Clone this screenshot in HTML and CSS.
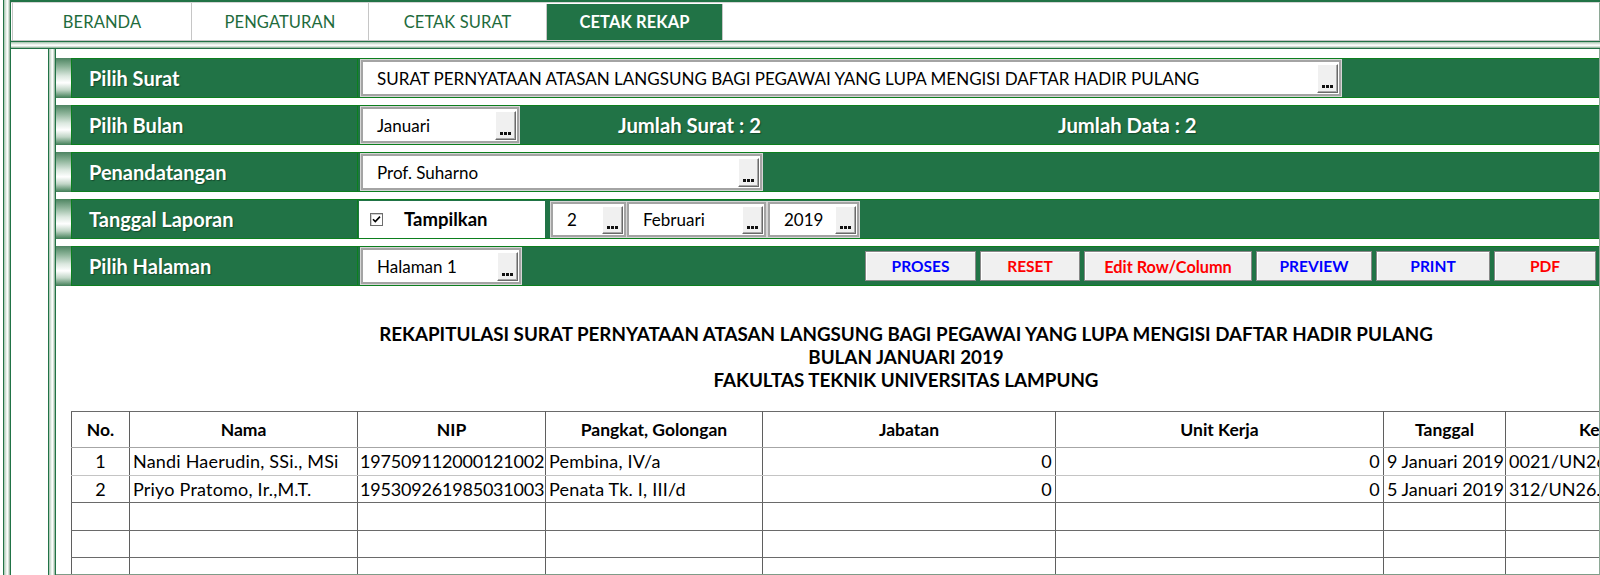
FILE: index.html
```html
<!DOCTYPE html>
<html lang="id">
<head>
<meta charset="utf-8">
<title>Cetak Rekap</title>
<link rel="stylesheet" href="styles.css">
</head>
<body>
<div class="app">
  <div class="obar"></div>
  <div class="main">
    <div class="topline"></div>
    <nav class="tabs">
      <div class="tab t1">BERANDA</div>
      <div class="tab t2">PENGATURAN</div>
      <div class="tab t3">CETAK SURAT</div>
      <div class="tab t4 active">CETAK REKAP</div>
    </nav>
    <div class="hbar"></div>
    <div class="body">
      <div class="lgap"></div>
      <div class="ibar"></div>
      <div class="content">
        <div class="form">
          <div class="row">
            <div class="cap"></div>
            <div class="rb">
              <div class="lbl">Pilih Surat</div>
              <div class="dd w-surat"><span class="val">SURAT PERNYATAAN ATASAN LANGSUNG BAGI PEGAWAI YANG LUPA MENGISI DAFTAR HADIR PULANG</span><span class="eb"><svg width="11" height="3" viewBox="0 0 11 3"><rect x="0" y="0" width="3" height="3"/><rect x="4" y="0" width="3" height="3"/><rect x="8" y="0" width="3" height="3"/></svg></span></div>
            </div>
          </div>
          <div class="row">
            <div class="cap"></div>
            <div class="rb">
              <div class="lbl">Pilih Bulan</div>
              <div class="dd w-bulan"><span class="val">Januari</span><span class="eb"><svg width="11" height="3" viewBox="0 0 11 3"><rect x="0" y="0" width="3" height="3"/><rect x="4" y="0" width="3" height="3"/><rect x="8" y="0" width="3" height="3"/></svg></span></div>
              <div class="stat s1">Jumlah Surat : 2</div>
              <div class="stat s2">Jumlah Data : 2</div>
            </div>
          </div>
          <div class="row">
            <div class="cap"></div>
            <div class="rb">
              <div class="lbl">Penandatangan</div>
              <div class="dd w-ttd"><span class="val">Prof. Suharno</span><span class="eb"><svg width="11" height="3" viewBox="0 0 11 3"><rect x="0" y="0" width="3" height="3"/><rect x="4" y="0" width="3" height="3"/><rect x="8" y="0" width="3" height="3"/></svg></span></div>
            </div>
          </div>
          <div class="row">
            <div class="cap"></div>
            <div class="rb">
              <div class="lbl">Tanggal Laporan</div>
              <div class="chkwrap">
                <span class="chk"><svg width="11" height="11" viewBox="0 0 11 11"><path d="M2 5.2 L4.3 7.6 L9 2.6" fill="none" stroke="#000" stroke-width="1.6"/></svg></span>
                <span class="chklbl">Tampilkan</span>
              </div>
              <div class="dd sm w-tgl"><span class="val">2</span><span class="eb"><svg width="11" height="3" viewBox="0 0 11 3"><rect x="0" y="0" width="3" height="3"/><rect x="4" y="0" width="3" height="3"/><rect x="8" y="0" width="3" height="3"/></svg></span></div>
              <div class="dd sm w-bln"><span class="val">Februari</span><span class="eb"><svg width="11" height="3" viewBox="0 0 11 3"><rect x="0" y="0" width="3" height="3"/><rect x="4" y="0" width="3" height="3"/><rect x="8" y="0" width="3" height="3"/></svg></span></div>
              <div class="dd sm w-thn"><span class="val">2019</span><span class="eb"><svg width="11" height="3" viewBox="0 0 11 3"><rect x="0" y="0" width="3" height="3"/><rect x="4" y="0" width="3" height="3"/><rect x="8" y="0" width="3" height="3"/></svg></span></div>
            </div>
          </div>
          <div class="row">
            <div class="cap"></div>
            <div class="rb">
              <div class="lbl">Pilih Halaman</div>
              <div class="dd w-hal"><span class="val">Halaman 1</span><span class="eb"><svg width="11" height="3" viewBox="0 0 11 3"><rect x="0" y="0" width="3" height="3"/><rect x="4" y="0" width="3" height="3"/><rect x="8" y="0" width="3" height="3"/></svg></span></div>
              <div class="btns">
                <button class="b blue b-proses">PROSES</button>
                <button class="b red b-reset">RESET</button>
                <button class="b red b-edit">Edit Row/Column</button>
                <button class="b blue b-preview">PREVIEW</button>
                <button class="b blue b-print">PRINT</button>
                <button class="b red b-pdf">PDF</button>
              </div>
            </div>
          </div>
        </div>

        <div class="report">
          <div class="title">
            <div>REKAPITULASI SURAT PERNYATAAN ATASAN LANGSUNG BAGI PEGAWAI YANG LUPA MENGISI DAFTAR HADIR PULANG</div>
            <div>BULAN JANUARI 2019</div>
            <div>FAKULTAS TEKNIK UNIVERSITAS LAMPUNG</div>
          </div>
          <table class="rekap">
            <colgroup>
              <col class="c-no"><col class="c-nama"><col class="c-nip"><col class="c-pkt"><col class="c-jab"><col class="c-unit"><col class="c-tgl"><col class="c-ket">
            </colgroup>
            <thead>
              <tr>
                <th>No.</th><th>Nama</th><th>NIP</th><th>Pangkat, Golongan</th><th>Jabatan</th><th>Unit Kerja</th><th>Tanggal</th><th class="ket kh">Keterangan</th>
              </tr>
            </thead>
            <tbody>
              <tr class="r1">
                <td class="ctr">1</td><td>Nandi Haerudin, SSi., MSi</td><td class="nip">197509112000121002</td><td>Pembina, IV/a</td><td class="num">0</td><td class="num">0</td><td class="tg">9 Januari 2019</td><td class="ket">0021/UN26.15/KP/2019</td>
              </tr>
              <tr class="r2">
                <td class="ctr">2</td><td>Priyo Pratomo, Ir.,M.T.</td><td class="nip">195309261985031003</td><td>Penata Tk. I, III/d</td><td class="num">0</td><td class="num">0</td><td class="tg">5 Januari 2019</td><td class="ket">312/UN26.15/KP/2019</td>
              </tr>
              <tr><td></td><td></td><td></td><td></td><td></td><td></td><td></td><td class="ket"></td></tr>
              <tr><td></td><td></td><td></td><td></td><td></td><td></td><td></td><td class="ket"></td></tr>
              <tr><td></td><td></td><td></td><td></td><td></td><td></td><td></td><td class="ket"></td></tr>
            </tbody>
          </table>
        </div>
      </div>
    </div>
  </div>
</div>
</body>
</html>
```

FILE: styles.css
```css
* { box-sizing: border-box; }
html, body { margin: 0; padding: 0; }
body {
  width: 1600px;
  height: 575px;
  overflow: hidden;
  background: #fff;
  font-family: "Lato", "Liberation Sans", sans-serif;
  color: #000;
}
.app {
  display: flex;
  width: 1600px;
  height: 575px;
  overflow: hidden;
}
.obar {
  width: 8px;
  margin-left: 3px;
  flex: none;
  background: linear-gradient(to right, #217346 0, #217346 1px, #a3c1ac 1px, #e6efe8 40%, #ffffff 55%, #c2d5c7 75%, #7aa286 calc(100% - 1px), #217346 calc(100% - 1px));
}
.main {
  flex: 1;
  display: flex;
  flex-direction: column;
  min-width: 0;
}
.topline { height: 2px; background: #217346; flex: none; }
.tabs {
  height: 39px;
  flex: none;
  display: flex;
  border-top: 1px solid #d4d4d4;
  border-bottom: 1px solid #c4c4c4;
  border-right: 1px solid #8ea896;
  padding-left: 1px;
  background: #fff;
}
.tab {
  border-left: 1px solid #c6c6c6;
  display: flex;
  align-items: center;
  justify-content: center;
  font-size: 16.5px;
  color: #1e6b3c;
  letter-spacing: 0.1px;
}
.t1 { width: 179px; }
.t2 { width: 177px; }
.t3 { width: 178px; }
.t4 { width: 177px; border-right: 1px solid #c6c6c6; }
.tab.active {
  background: #217346;
  color: #fff;
  font-weight: 700;
  margin-top: 1px;
}
.hbar {
  height: 8px;
  flex: none;
  background: linear-gradient(to bottom, #217346 0, #217346 1px, #a3c1ac 1px, #e6efe8 40%, #ffffff 55%, #c2d5c7 75%, #7aa286 calc(100% - 1px), #217346 calc(100% - 1px));
}
.body {
  flex: 1;
  display: flex;
  min-height: 0;
}
.lgap { width: 37px; flex: none; }
.ibar {
  width: 8px;
  flex: none;
  background: linear-gradient(to right, #217346 0, #217346 1px, #a3c1ac 1px, #e6efe8 40%, #ffffff 55%, #c2d5c7 75%, #7aa286 calc(100% - 1px), #217346 calc(100% - 1px));
}
.content {
  flex: 1;
  min-width: 0;
  overflow: hidden;
  border-right: 1px solid #8ea896;
  border-bottom: 1px solid #7f9c88;
}

/* form rows */
.form {
  padding-top: 9px;
  display: flex;
  flex-direction: column;
  gap: 7px;
}
.row {
  display: flex;
  height: 40px;
}
.cap {
  width: 15px;
  flex: none;
  background: linear-gradient(to bottom, #4d8461 0%, #8fb59b 22%, #dbe8df 45%, #ffffff 62%, #c0d5c6 80%, #3f7d55 100%);
}
.rb {
  flex: 1;
  display: flex;
  align-items: center;
  background: #217346;
  border-top: 1px solid #0c7f1e;
  border-bottom: 1px solid #0c7f1e;
}
.lbl {
  width: 287px;
  flex: none;
  align-self: stretch;
  display: flex;
  align-items: center;
  padding-left: 17px;
  border-left: 1px solid #0c7f1e;
  border-right: 1px solid #0c7f1e;
  color: #fff;
  font-weight: 700;
  font-size: 20px;
  text-shadow: 1px 1px 1px rgba(0, 0, 0, 0.35);
}
.dd {
  height: 36px;
  margin-left: 3px;
  flex: none;
  display: flex;
  align-items: center;
  background: #fff;
  border: 2px solid #a4a4a4;
  box-shadow: 0 0 0 1px #d6d6d6;
}
.dd.sm { height: 35px; }
.dd .val {
  flex: 1;
  padding-left: 14px;
  font-size: 17px;
  white-space: nowrap;
  overflow: hidden;
}
.eb {
  width: 21px;
  height: 29px;
  margin-right: 1px;
  margin-top: 1px;
  flex: none;
  display: flex;
  align-items: flex-end;
  justify-content: center;
  padding-bottom: 4px;
  background: #f0f0f0;
  border: 1px solid;
  border-color: #ffffff #6a6a6a #6a6a6a #ffffff;
  box-shadow: inset -1px -1px 0 #a9a9a9;
}
.dd.sm .eb { height: 28px; }
.eb svg { fill: #111; display: block; }
.w-surat { width: 980px; }
.w-bulan { width: 158px; }
.w-ttd { width: 401px; }
.w-hal { width: 160px; }
.w-tgl { width: 75px; margin-left: 6px; }
.w-bln { width: 139px; margin-left: 1px; }
.w-thn { width: 91px; margin-left: 2px; }

.stat {
  color: #fff;
  font-weight: 700;
  font-size: 20.3px;
  text-shadow: 1px 1px 1px rgba(0, 0, 0, 0.35);
  white-space: nowrap;
}
.s1 { margin-left: 99px; width: 440px; }

.chkwrap {
  width: 186px;
  height: 37px;
  margin-left: 1px;
  background: #fff;
  display: flex;
  align-items: center;
  flex: none;
}
.chk {
  width: 13px;
  height: 13px;
  margin-left: 11px;
  border: 1px solid #6d6d6d;
  box-shadow: inset 1px 1px 0 #d0d0d0;
  background: #fff;
  display: flex;
  align-items: center;
  justify-content: center;
}
.chk svg { display: block; }
.chklbl {
  margin-left: 21px;
  font-weight: 700;
  font-size: 18.5px;
}

.btns {
  display: flex;
  gap: 4px;
  margin-left: 344px;
}
.b {
  height: 30px;
  padding: 0;
  background: #f0f0f0;
  border: 1px solid #888;
  box-shadow: inset 1px 1px 0 #fff;
  font-family: "Lato", "Liberation Sans", sans-serif;
  font-weight: 700;
  font-size: 15.5px;
  text-align: center;
}
.b-edit { font-size: 16.3px; }
.b.blue { color: #0000ff; }
.b.red { color: #ff0000; }
.b-proses { width: 111px; }
.b-reset { width: 100px; }
.b-edit { width: 168px; }
.b-preview { width: 116px; }
.b-print { width: 114px; }
.b-pdf { width: 102px; }

/* report */
.report { padding-left: 15px; }
.title {
  width: 1670px;
  margin-top: 36px;
  text-align: center;
  font-weight: 700;
  font-size: 18.8px;
  line-height: 23px;
}
.rekap {
  margin-top: 20px;
  border-collapse: collapse;
  table-layout: fixed;
  width: 1666px;
  font-size: 18px;
}
.c-no { width: 58px; }
.c-nama { width: 228px; }
.c-nip { width: 188px; }
.c-pkt { width: 217px; }
.c-jab { width: 293px; }
.c-unit { width: 328px; }
.c-tgl { width: 122px; }
.c-ket { width: 232px; }
.rekap th, .rekap td {
  border-left: 1px solid #5f5f5f;
  border-right: 1px solid #5f5f5f;
  border-bottom: 1px solid #6a6a6a;
  padding: 0 3px;
  white-space: nowrap;
  overflow: hidden;
}
.rekap th {
  height: 36px;
  border-top: 1px solid #6a6a6a;
  border-bottom: 1px solid #a6a6a6;
  font-weight: 700;
  text-align: center;
  font-size: 17.5px;
}
.rekap th.kh { text-align: left; padding-left: 73px; }
.rekap td { height: 27.5px; text-align: left; letter-spacing: 0.2px; }
.rekap td.tg, .rekap td.ket { letter-spacing: 0; }
.rekap tr.r1 td { border-bottom-color: #c4c4c4; }
.rekap .ctr { text-align: center; }
.rekap .num { text-align: right; }
.rekap .nip { padding-left: 2px; letter-spacing: -0.2px; }
.rekap .ket { border-left-color: #b0b0b0; }
```
